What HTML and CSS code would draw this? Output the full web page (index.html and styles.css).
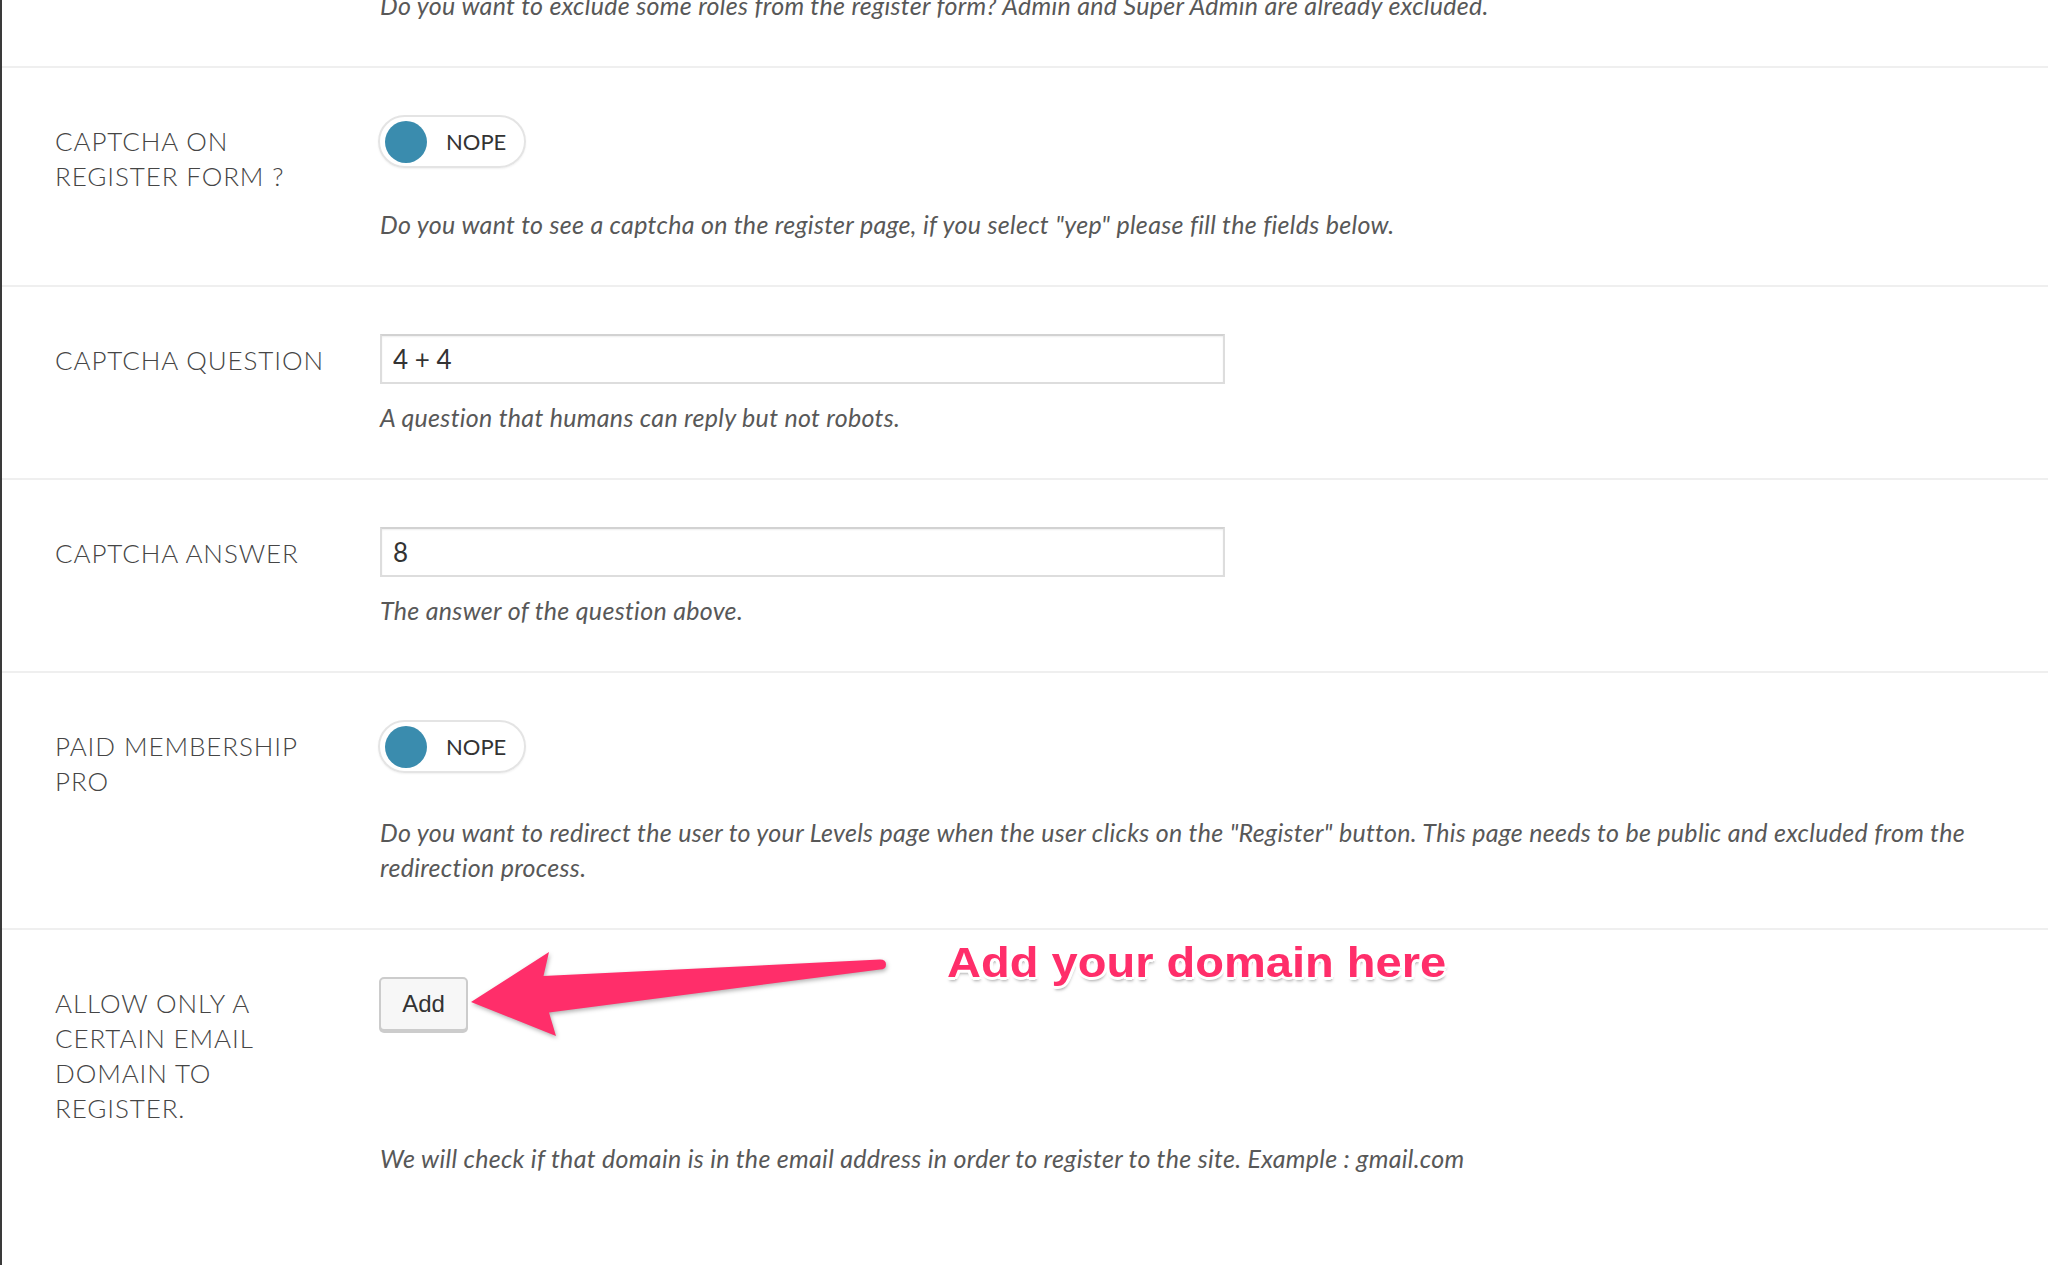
FILE: index.html
```html
<!DOCTYPE html>
<html lang="en">
<head>
<meta charset="utf-8">
<title>Register settings</title>
<link rel="stylesheet" href="styles.css">
</head>
<body>
<div class="page">
  <div class="row partial">
    <div class="label"></div>
    <div class="field">
      <p class="desc">Do you want to exclude some roles from the register form? Admin and Super Admin are already excluded.</p>
    </div>
  </div>

  <div class="row">
    <div class="label">Captcha on register form ?</div>
    <div class="field">
      <div class="toggle"><span class="knob"></span><span class="toggle-text">NOPE</span></div>
      <p class="desc after-toggle">Do you want to see a captcha on the register page, if you select "yep" please fill the fields below.</p>
    </div>
  </div>

  <div class="row">
    <div class="label">Captcha question</div>
    <div class="field">
      <input class="text-input" type="text" value="4 + 4">
      <p class="desc after-input">A question that humans can reply but not robots.</p>
    </div>
  </div>

  <div class="row">
    <div class="label">Captcha answer</div>
    <div class="field">
      <input class="text-input" type="text" value="8">
      <p class="desc after-input">The answer of the question above.</p>
    </div>
  </div>

  <div class="row">
    <div class="label">Paid Membership Pro</div>
    <div class="field">
      <div class="toggle"><span class="knob"></span><span class="toggle-text">NOPE</span></div>
      <p class="desc after-toggle2">Do you want to redirect the user to your Levels page when the user clicks on the "Register" button. This page needs to be public and excluded from the redirection process.</p>
    </div>
  </div>

  <div class="row annotated">
    <div class="label">Allow only a certain email domain to register.</div>
    <div class="field">
      <button class="btn" type="button">Add</button>
      <div class="domain-list"></div>
      <p class="desc">We will check if that domain is in the email address in order to register to the site. Example : gmail.com</p>
    </div>
    <svg class="arrow" viewBox="2 929 2046 200" width="2046" height="200" aria-hidden="true">
      <path d="M471 1001 L549 951 L543.5 975 L880 958.5 Q886 958.5 886 963.5 Q886 968.5 880 968.5 L549 1011.5 L556 1035 Z" fill="#ff2e6a"/>
    </svg>
    <div class="callout">Add your domain here</div>
  </div>
</div>
</body>
</html>
```

FILE: styles.css
```css
html, body {
  margin: 0;
  padding: 0;
  background: #ffffff;
}

body {
  font-family: Lato, "Open Sans", "Liberation Sans", sans-serif;
  overflow: hidden;
  height: 1265px;
}

.page {
  border-left: 2px solid #3a3a3a;
  min-height: 1300px;
  margin-top: -12px;
}

.row {
  display: grid;
  grid-template-columns: 378px 1fr;
  padding: 47px 0 43px;
  border-top: 2px solid #efefef;
}

.row.partial {
  border-top: 0;
  padding-top: 0;
}

.label {
  padding-left: 53px;
  margin-top: 9px;
  width: 282px;
  font-size: 26px;
  font-weight: 300;
  letter-spacing: 0.9px;
  line-height: 35px;
  color: #454545;
  text-transform: uppercase;
}

.field {
  min-width: 0;
}

.desc {
  margin: 0;
  font-size: 25px;
  letter-spacing: 0.3px;
  line-height: 35px;
  font-style: italic;
  color: #585858;
  padding-right: 60px;
}

.after-toggle { margin-top: 39px; }
.after-toggle2 { margin-top: 42px; }
.after-input { margin-top: 16px; }

.toggle {
  box-sizing: border-box;
  width: 148px;
  height: 53px;
  margin-left: -2px;
  border: 2px solid #e4e4e4;
  border-radius: 27px;
  display: flex;
  align-items: center;
  padding-left: 5px;
  gap: 19px;
  box-shadow: 0 1px 2px rgba(0, 0, 0, 0.06);
}

.knob {
  width: 42px;
  height: 42px;
  border-radius: 50%;
  background: #3a8cae;
  flex: none;
}

.toggle-text {
  font-size: 22px;
  font-weight: 400;
  color: #333333;
}

.text-input {
  display: block;
  box-sizing: border-box;
  width: 845px;
  height: 50px;
  margin: 0;
  padding: 0 11px;
  border: 2px solid #dddddd;
  border-top-color: #d2d2d2;
  box-shadow: inset 0 1px 2px rgba(0, 0, 0, 0.07);
  font-family: Lato, "Open Sans", sans-serif;
  font-size: 26px;
  color: #333333;
  background: #ffffff;
  outline: none;
}

.btn {
  display: block;
  box-sizing: border-box;
  width: 89px;
  height: 54px;
  margin: 0 0 0 -1px;
  padding: 0;
  border: 2px solid #cccccc;
  border-radius: 5px;
  background: #f7f7f7;
  box-shadow: 0 2px 0 #cccccc;
  font-family: "Liberation Sans", Arial, sans-serif;
  font-size: 24px;
  color: #333333;
}

.domain-list {
  height: 71px;
}

.annotated .desc {
  margin-top: 39px;
}

.annotated {
  position: relative;
}

.arrow {
  position: absolute;
  left: 0;
  top: 0;
  filter: drop-shadow(1px 2px 2px rgba(0, 0, 0, 0.3));
}

.callout {
  position: absolute;
  left: 945px;
  top: 12px;
  font-family: "Liberation Sans", Arial, sans-serif;
  font-weight: 700;
  font-size: 42px;
  line-height: 42px;
  color: #ff2e6a;
  white-space: nowrap;
  transform: scaleX(1.12);
  transform-origin: left top;
  text-shadow:
    2px 0 0 #fff, -2px 0 0 #fff, 0 2px 0 #fff, 0 -2px 0 #fff,
    2px 2px 0 #fff, -2px -2px 0 #fff, 2px -2px 0 #fff, -2px 2px 0 #fff,
    3px 0 0 #fff, -3px 0 0 #fff, 0 3px 0 #fff, 0 -3px 0 #fff,
    1px 4px 3px rgba(0, 0, 0, 0.35);
}
```
